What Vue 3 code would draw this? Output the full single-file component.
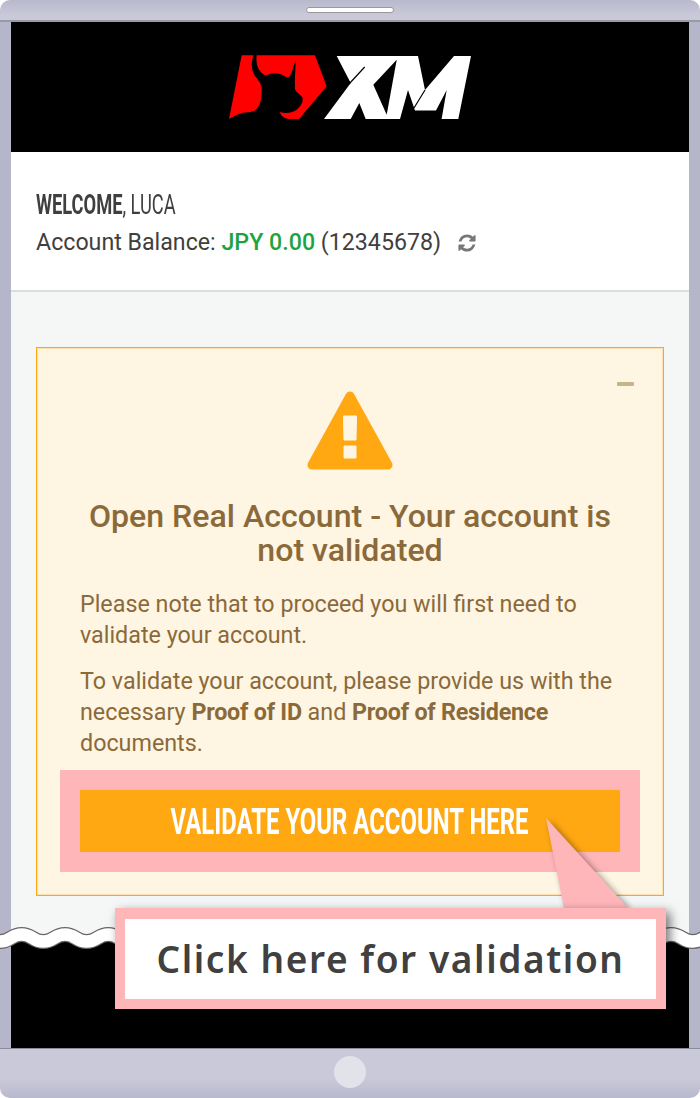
<script setup>
const period = 43.3
const centre = `M-43.3 941.500 ` + Array.from({ length: 19 }, () =>
  `c${period / 4} 0 ${period / 4} -7 ${period / 2} -7 s${period / 4} 7 ${period / 2} 7`
).join(' ')
</script>

<template>
  <div class="device">
    <div class="top-bar"><span class="speaker"></span></div>
    <div class="middle">
      <main class="screen">
        <header class="brand">
          <svg class="logo" viewBox="200 22 300 130" width="300" height="130" aria-label="XM">
            <g transform="translate(225 48) scale(.3333)" fill="#f00">
              <path d="M12 213 50 22H86C80 36 78 55 84 72 90 90 108 100 110 120 111 145 108 170 94 184 86 192 70 192 54 194 38 198 24 206 12 213Z" />
              <path d="M95 22H270L305 115 222 213H190C178 210 168 206 165 192 180 197 200 196 214 186 228 176 236 160 232 148 226 138 212 134 210 122 208 95 212 65 212 38 206 50 204 66 196 82 192 90 186 90 178 84 160 72 140 74 124 82 112 80 100 66 96 50 94 40 94 30 95 22Z" />
            </g>
            <path fill="#fff" d="M336.700 56H418L425 90 454 56H471L458.300 119H441.600L446.700 90 436 110.500H415L408 90 400 119H365.700L359.300 103 350.700 119H324L350.700 83Z" />
            <path fill="#000" d="M396.700 59.700 373.300 84.700 386.700 114.700Z" />
            <path fill="none" stroke="#000" stroke-width="1.200" d="M349 84 364.700 67M425 90 414 108" />
          </svg>
        </header>

        <section class="welcome">
          <h2 class="greeting"><span class="squeeze"><strong>WELCOME</strong>, LUCA</span></h2>
          <p class="balance">Account Balance: <b class="amount">JPY 0.00</b> (12345678)<svg class="refresh" viewBox="0 0 1792 1792" width="20" height="20" aria-hidden="true">
              <path d="M1639 1056q0 5-1 7-64 268-268 434.500t-478 166.500q-146 0-282.500-55t-243.500-157l-129 129q-19 19-45 19t-45-19-19-45v-448q0-26 19-45t45-19h448q26 0 45 19t19 45-19 45l-137 137q71 66 161 102t187 36q134 0 250-65t186-179q11-17 53-117 8-23 30-23h192q13 0 22.500 9.500t9.500 22.500zm25-800v448q0 26-19 45t-45 19h-448q-26 0-45-19t-19-45 19-45l138-138q-148-137-349-137-134 0-250 65t-186 179q-11 17-53 117-8 23-30 23h-199q-13 0-22.500-9.500t-9.500-22.500v-7q65-268 270-434.500t480-166.500q146 0 284 55.500t245 156.500l130-129q19-19 45-19t45 19 19 45z" />
            </svg></p>
        </section>

        <section class="content">
          <div class="notice">
            <span class="collapse"></span>
            <svg class="warning" viewBox="0 0 86 80" width="86" height="80" aria-hidden="true">
              <path d="M43 5 81 74H5Z" fill="#ffa812" stroke="#ffa812" stroke-width="9" stroke-linejoin="round" />
              <path d="M36.500 25H49.500L49 49H37ZM37 55H49V67H37Z" fill="#fff5e3" stroke="#fff5e3" stroke-width="1" stroke-linejoin="round" />
            </svg>
            <h1 class="title">Open Real Account - Your account is not validated</h1>
            <p class="copy">Please note that to proceed you will first need to validate your account.</p>
            <p class="copy">To validate your account, please provide us with the necessary <b>Proof of ID</b> and <b>Proof of Residence</b> documents.</p>
            <button class="cta"><span class="cta-label">VALIDATE YOUR ACCOUNT HERE</span></button>
          </div>
        </section>

        <div class="footer-band"></div>
      </main>
    </div>
    <div class="bottom-bar"><span class="home"></span></div>

    <svg class="wave" viewBox="0 920 700 36" width="700" height="36" aria-hidden="true">
      <path :d="centre" fill="none" stroke="#666" stroke-width="15" />
      <path :d="centre" fill="none" stroke="#fff" stroke-width="12.500" />
    </svg>

    <aside class="callout">
      <svg class="tail" viewBox="0 0 90 92" width="90" height="92" aria-hidden="true">
        <path d="M2 1 20 91H84Z" fill="#ffb6b9" />
      </svg>
      <div class="callout-body">Click here for validation</div>
    </aside>
  </div>
</template>

<style>
html, body { margin: 0; background: #fff; }
</style>

<style scoped>
.device {
  position: relative;
  width: 700px;
  height: 1098px;
  display: flex;
  flex-direction: column;
  overflow: hidden;
  border-radius: 10px;
  font-family: Roboto, "Liberation Sans", sans-serif;
}
.top-bar {
  flex: 0 0 22px;
  box-sizing: border-box;
  display: flex;
  justify-content: center;
  padding-top: 7px;
  background: linear-gradient(#b9b9cd, #c9c9d9 16px);
  border-bottom: 2px solid #9a9aa6;
}
.speaker {
  width: 88px;
  height: 6px;
  box-sizing: border-box;
  background: #fff;
  border: 1px solid #999;
  border-radius: 3px;
}
.middle {
  flex: 1;
  display: flex;
  padding: 0 11px;
  background: #b6b6cb;
  min-height: 0;
}
.screen {
  flex: 1;
  display: flex;
  flex-direction: column;
  background: #000;
}
.brand {
  flex: 0 0 130px;
  background: #000;
}
.logo { display: block; margin: 0 auto; }
.welcome {
  flex: 0 0 140px;
  box-sizing: border-box;
  padding: 37px 25px 0;
  background: #fff;
  border-bottom: 2px solid #dcdede;
  color: #3f3f3f;
}
.greeting {
  margin: 0;
  font-size: 28px;
  line-height: 32px;
  font-weight: 400;
  white-space: nowrap;
}
.greeting strong { font-weight: 700; }
.squeeze {
  display: inline-block;
  transform: scaleX(.653);
  transform-origin: left center;
}
.balance {
  margin: 5px 0 0;
  font-size: 23.200px;
  line-height: 32px;
  white-space: nowrap;
}
.amount { font-weight: 500; color: #1fa33e; }
.refresh {
  fill: #777;
  margin-left: 16px;
  vertical-align: -3px;
}
.content {
  flex: 0 0 648px;
  box-sizing: border-box;
  padding: 55px 25px 0;
  background: #f5f7f6;
}
.notice {
  position: relative;
  box-sizing: border-box;
  height: 549px;
  padding: 43px 43px 0;
  background: #fff5e3;
  border: 1px solid #ffa812;
  box-shadow: inset 0 0 0 1px rgba(255, 168, 18, .25);
  color: #8a6a3a;
}
.collapse {
  position: absolute;
  top: 34px;
  right: 29px;
  width: 17px;
  height: 4px;
  background: #c8b48c;
  border-radius: 1px;
}
.warning { display: block; margin: 0 auto 29px; }
.title {
  margin: -1px -10px 22px;
  text-align: center;
  font-size: 32.100px;
  line-height: 34px;
  font-weight: 500;
}
.copy {
  margin: 0 0 15px;
  font-size: 23.300px;
  line-height: 31px;
}
.copy b {
  font-weight: 700;
  letter-spacing: -.22px;
}
.cta {
  display: block;
  width: 540px;
  height: 62px;
  margin-top: 31px;
  padding: 0;
  border: 0;
  background: #ffa812;
  box-shadow: 0 0 0 20px #ffb6b9;
  color: #fff;
  font: 700 36px/64px Roboto, sans-serif;
  text-align: center;
  white-space: nowrap;
}
.cta-label {
  display: inline-block;
  transform: scaleX(.664);
}
.footer-band { flex: 1; background: #000; }
.bottom-bar {
  flex: 0 0 50px;
  display: flex;
  justify-content: center;
  padding-top: 7px;
  box-sizing: border-box;
  background: linear-gradient(#c9c9d9 30px, #b9b9cd);
  border-top: 1px solid #8c8c98;
}
.home {
  width: 32px;
  height: 32px;
  border-radius: 50%;
  background: #e2e2ea;
}
.wave {
  position: absolute;
  left: 0;
  top: 920px;
}
.callout {
  position: absolute;
  left: 115px;
  top: 908px;
  width: 551px;
  height: 101px;
}
.tail {
  position: absolute;
  left: 429px;
  top: -91px;
  filter: drop-shadow(3px 2px 3px rgba(0, 0, 0, .4));
}
.callout-body {
  position: relative;
  box-sizing: border-box;
  height: 101px;
  background: #fff;
  border: solid #ffb6b9;
  border-width: 11px 10px 10px;
  box-shadow: 4px 4px 10px rgba(0, 0, 0, .55);
  color: #404040;
  font: 600 37px/80px "Noto Sans", sans-serif;
  letter-spacing: 1.600px;
  text-align: center;
  white-space: nowrap;
}
</style>
